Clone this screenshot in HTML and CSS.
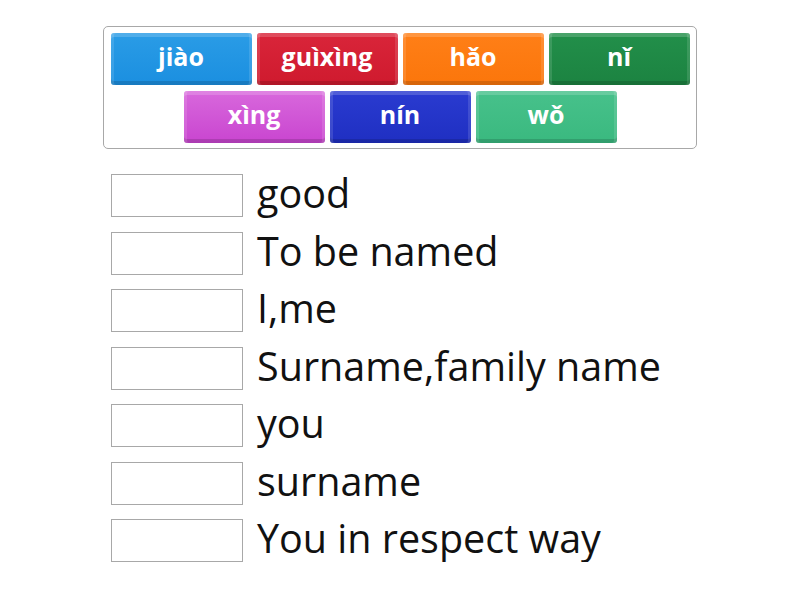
FILE: index.html
```html
<!DOCTYPE html>
<html>
<head>
<meta charset="utf-8">
<link rel="stylesheet" href="styles.css">
</head>
<body>
<div class="page">
  <div class="bank">
    <div class="row">
      <div class="tile blue">jiào</div>
      <div class="tile red">guìxìng</div>
      <div class="tile orange">hǎo</div>
      <div class="tile green">nǐ</div>
    </div>
    <div class="row">
      <div class="tile purple">xìng</div>
      <div class="tile navy">nín</div>
      <div class="tile mint">wǒ</div>
    </div>
  </div>
  <div class="list">
    <div class="item"><div class="slot"></div><div class="label">good</div></div>
    <div class="item"><div class="slot"></div><div class="label">To be named</div></div>
    <div class="item"><div class="slot"></div><div class="label">I,me</div></div>
    <div class="item"><div class="slot"></div><div class="label">Surname,family name</div></div>
    <div class="item"><div class="slot"></div><div class="label">you</div></div>
    <div class="item"><div class="slot"></div><div class="label">surname</div></div>
    <div class="item"><div class="slot"></div><div class="label">You in respect way</div></div>
  </div>
</div>
</body>
</html>
```
FILE: styles.css
```css
html, body {
  margin: 0;
  padding: 0;
  background: #fff;
  font-family: "Open Sans", "Liberation Sans", sans-serif;
}
.page {
  padding: 26px 0 0 103px;
}
.bank {
  width: 594px;
  height: 123px;
  border: 1px solid #a8a8a8;
  border-radius: 5px;
  padding: 6px 0 0;
  box-sizing: border-box;
  display: flex;
  flex-direction: column;
  align-items: center;
  gap: 6px;
}
.row {
  display: flex;
  gap: 5px;
}
.tile {
  width: 141px;
  height: 52px;
  border-radius: 3px;
  color: #fff;
  font-weight: 700;
  font-size: 25px;
  display: flex;
  align-items: center;
  justify-content: center;
  padding-bottom: 6px;
  box-sizing: border-box;
  box-shadow: inset 0 4px 0 rgba(255,255,255,0.18), inset 3px 0 0 rgba(255,255,255,0.12), inset -3px 0 0 rgba(255,255,255,0.12), inset 0 -4px 0 rgba(0,0,0,0.14);
}
.blue { background: linear-gradient(#2a9ce6, #1b8fe0); }
.red { background: linear-gradient(#d9253a, #cf1a2e); }
.orange { background: linear-gradient(#ff7f17, #fb760b); }
.green { background: linear-gradient(#228f4a, #1c8341); }
.purple { background: linear-gradient(#d868dc, #c945d0); }
.navy { background: linear-gradient(#2a3bd0, #1f2fc2); }
.mint { background: linear-gradient(#47c18b, #3ab97f); }
.list {
  padding: 25px 0 0 8px;
  display: flex;
  flex-direction: column;
  gap: 14.5px;
}
.item {
  display: flex;
  align-items: center;
  gap: 14px;
  height: 43px;
}
.slot {
  width: 132px;
  height: 43px;
  border: 1px solid #a8a8a8;
  box-sizing: border-box;
}
.label {
  font-size: 39.5px;
  color: #111;
  line-height: 43px;
  padding-bottom: 4px;
}
```
